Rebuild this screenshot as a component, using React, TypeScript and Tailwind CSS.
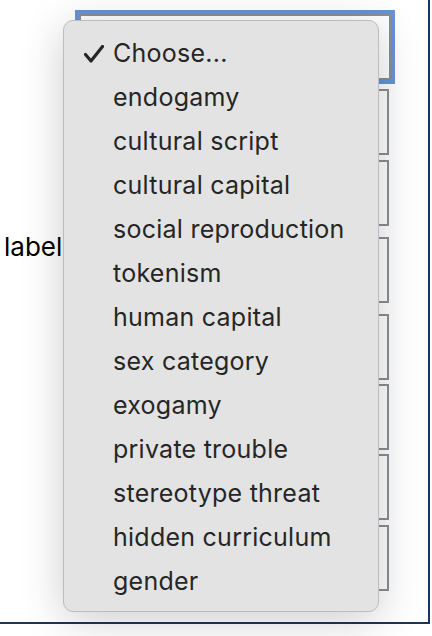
const options = [
  "Choose...",
  "endogamy",
  "cultural script",
  "cultural capital",
  "social reproduction",
  "tokenism",
  "human capital",
  "sex category",
  "exogamy",
  "private trouble",
  "stereotype threat",
  "hidden curriculum",
  "gender",
];

const font = { fontFamily: "Inter, 'Noto Sans', sans-serif" };

const Box = ({ className = "" }: { className?: string }) => (
  <div className={`h-[66px] w-[310px] ml-[79px] border-2 border-[#8b8e94] bg-white ${className}`}></div>
);

export default function App() {
  return (
    <div className="relative h-[636px] w-[432px] overflow-hidden bg-white" style={font}>
      {/* form behind the open menu */}
      <div className="w-[430px] border-r-2 border-b-2 border-[#1b3460] pt-[14px] pb-[31px]">
        <div className="ml-[79px] h-[66px] w-[312px] border-2 border-[#8b8e94] bg-white outline-4 outline-[#6494d8]"></div>
        <Box className="mt-[9px]" />
        <Box className="mt-[5px]" />
        <div className="mt-[11px] flex items-start">
          <span className="ml-[4px] -mr-[87px] w-[83px] text-[26px] leading-[20px] text-black">label</span>
          <Box />
        </div>
        <Box className="mt-[11px]" />
        <Box className="mt-[4px]" />
        <Box className="mt-[4px]" />
        <Box className="mt-[5px]" />
      </div>

      {/* native select menu */}
      <div className="absolute left-[63px] top-[20px] w-[316px] h-[592px] rounded-[10px] border border-[#bdbdbd] bg-[#e3e3e3] pt-[11px] shadow-[0_8px_44px_rgba(0,0,0,0.2)]">
        {options.map((o, i) => (
          <div key={o} className="relative flex h-[44px] items-center pl-[49px] text-[25px] tracking-[0.25px] text-[#262626]">
            {i === 0 && (
              <svg className="absolute left-[20px] top-[13px]" width="20" height="18" viewBox="0 0 20 18">
                <path d="M1.5 9.5 L7 16 L18.5 1.5" fill="none" stroke="#262626" strokeWidth="3.2" strokeLinecap="round" strokeLinejoin="round" />
              </svg>
            )}
            {o}
          </div>
        ))}
      </div>
    </div>
  );
}
